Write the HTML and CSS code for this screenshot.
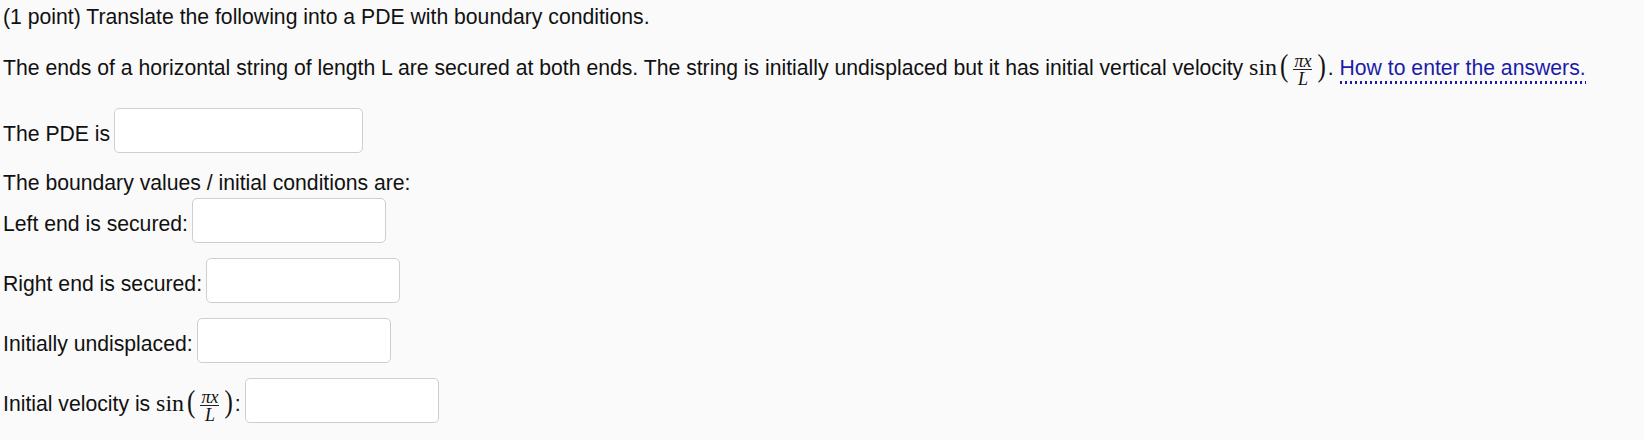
FILE: index.html
```html
<!DOCTYPE html>
<html lang="en">
<head>
<meta charset="utf-8">
<title>PDE problem</title>
<link rel="stylesheet" href="styles.css">
</head>
<body>
<div class="problem">
  <p class="line first">(1 point) Translate the following into a PDE with boundary conditions.</p>
  <p class="line second">The ends of a horizontal string of length L are secured at both ends. The string is initially undisplaced but it has initial vertical velocity <span class="math"><span class="fn">sin</span><span class="paren">(</span><span class="frac"><span class="num">πx</span><span class="bar"></span><span class="den">L</span></span><span class="paren">)</span></span>. <a class="help" href="#">How to enter the answers.</a></p>
  <div class="row pde">The PDE is <input class="ans wide" type="text"></div>
  <p class="line boundary">The boundary values / initial conditions are:</p>
  <div class="row cond">Left end is secured: <input class="ans" type="text"></div>
  <div class="row cond">Right end is secured: <input class="ans" type="text"></div>
  <div class="row cond">Initially undisplaced: <input class="ans" type="text"></div>
  <div class="row cond">Initial velocity is <span class="math"><span class="fn">sin</span><span class="paren">(</span><span class="frac"><span class="num">πx</span><span class="bar"></span><span class="den">L</span></span><span class="paren">)</span></span>: <input class="ans" type="text"></div>
</div>
</body>
</html>
```
FILE: styles.css
```css
html, body {
  margin: 0;
  padding: 0;
  background: #fafafa;
}

body {
  font-family: "Liberation Sans", Arial, Helvetica, sans-serif;
  font-size: 21.2px;
  line-height: 25px;
  color: #111;
}

.problem {
  padding: 4px 0 0 3px;
}

.line {
  margin: 0;
}

.second {
  margin-top: 25px;
}

.row {
  margin: 0;
  line-height: 25px;
}

.pde {
  margin-top: 22px;
}

.boundary {
  margin-top: 17px;
}

.cond {
  margin-top: 15px;
}

.boundary + .cond {
  margin-top: 3px;
}

.ans {
  box-sizing: border-box;
  width: 194px;
  height: 45px;
  margin: 0 0 0 -2px;
  padding: 4px 6px;
  border: 1px solid #cfcfcf;
  border-radius: 5px;
  background: #fff;
  font: inherit;
  vertical-align: 3.6px;
}

.ans.wide {
  width: 249px;
}

.math {
  font-family: "Liberation Serif", "Times New Roman", serif;
  white-space: nowrap;
}

.fn {
  font-size: 24px;
  margin-right: 1px;
}

.paren {
  display: inline-block;
  font-size: 25px;
  transform: scaleY(1.25);
  transform-origin: 50% 62%;
  margin: 0 2px;
}

.frac {
  display: inline-flex;
  flex-direction: column;
  align-items: center;
  vertical-align: middle;
  font-style: italic;
  font-size: 18px;
  line-height: 14px;
  padding: 0 3px;
}

.num {
  padding: 0 1px;
}

.bar {
  align-self: stretch;
  height: 1px;
  background: #222;
  margin: 1px 0 1px;
}

.den {
  padding-top: 1px;
}

.help {
  color: #1c1ca8;
  text-decoration: none;
  padding-bottom: 5px;
  background-image: linear-gradient(to right, #1c1ca8 50%, transparent 50%);
  background-repeat: repeat-x;
  background-position: 0 100%;
  background-size: 5px 3px;
}
```
